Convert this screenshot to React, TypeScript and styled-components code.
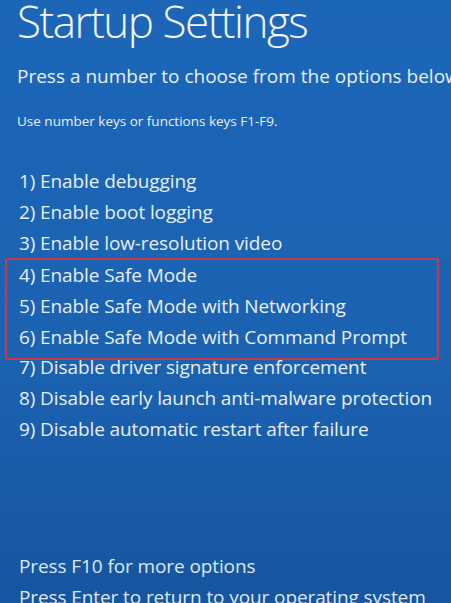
import styled, { createGlobalStyle } from 'styled-components';

const GlobalStyle = createGlobalStyle`
  html, body {
    margin: 0;
    padding: 0;
  }
  body {
    font-family: 'Open Sans', 'Noto Sans', sans-serif;
  }
`;

const OPTIONS = [
  'Enable debugging',
  'Enable boot logging',
  'Enable low-resolution video',
  'Enable Safe Mode',
  'Enable Safe Mode with Networking',
  'Enable Safe Mode with Command Prompt',
  'Disable driver signature enforcement',
  'Disable early launch anti-malware protection',
  'Disable automatic restart after failure',
];

// options 4-6 sit inside the red highlight box
const HIGHLIGHT = [3, 4, 5];

export default function App() {
  const before = OPTIONS.slice(0, HIGHLIGHT[0]);
  const marked = OPTIONS.slice(HIGHLIGHT[0], HIGHLIGHT[2] + 1);
  const after = OPTIONS.slice(HIGHLIGHT[2] + 1);

  const row = (text: string, i: number) => (
    <Option key={i}>
      {i + 1}) {text}
    </Option>
  );

  return (
    <>
      <GlobalStyle />
      <Screen>
        <Title>Startup Settings</Title>
        <Lead>Press a number to choose from the options below:</Lead>
        <Hint>Use number keys or functions keys F1-F9.</Hint>
        <OptionList>
          {before.map((t, i) => row(t, i))}
          <Highlight>{marked.map((t, i) => row(t, i + HIGHLIGHT[0]))}</Highlight>
          {after.map((t, i) => row(t, i + HIGHLIGHT[2] + 1))}
        </OptionList>
        <Footer>
          <Option>Press F10 for more options</Option>
          <Option>Press Enter to return to your operating system</Option>
        </Footer>
      </Screen>
    </>
  );
}

const Screen = styled.div`
  width: 451px;
  height: 603px;
  overflow: hidden;
  box-sizing: border-box;
  padding-left: 17px;
  display: flex;
  flex-direction: column;
  background: linear-gradient(180deg, #1c66b8 0%, #1b62b1 60%, #16559f 100%);
  color: #e8eff8;
  white-space: nowrap;
`;

const Title = styled.h1`
  margin: -1px 0 0;
  font-size: 44px;
  line-height: 44px;
  font-weight: 300;
  letter-spacing: -1.5px;
  color: #f2f6fb;
`;

const Lead = styled.p`
  margin: 21px 0 0;
  font-size: 19px;
  line-height: 24px;
`;

const Hint = styled.p`
  margin: 24px 0 0;
  font-size: 13.5px;
  line-height: 18px;
`;

const OptionList = styled.div`
  margin-top: 36px;
  display: flex;
  flex-direction: column;
`;

const Option = styled.div`
  padding-left: 2px;
  font-size: 19px;
  line-height: 31px;
  letter-spacing: -0.1px;
`;

const Highlight = styled.div`
  width: 434px;
  box-sizing: border-box;
  margin: -1px 0 -8px -12px;
  padding: 0 0 5px 10px;
  border: 2px solid #c33a4c;
  border-radius: 2px;
`;

const Footer = styled.div`
  margin-top: 106px;
  display: flex;
  flex-direction: column;
  color: #dde7f3;
`;
